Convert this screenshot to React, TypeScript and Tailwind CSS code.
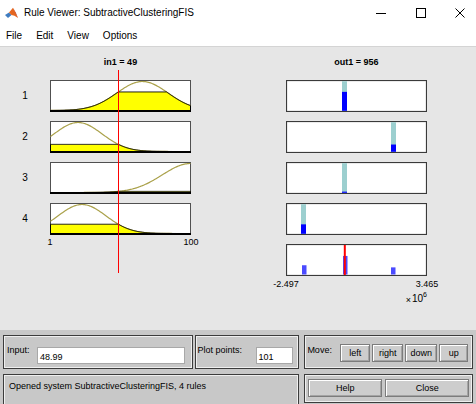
import React from "react";

const W = 141;
const H = 32;

type MF = { c: number; s: number };
const mfs: MF[] = [
  { c: 66, s: 18 },
  { c: 20.5, s: 17 },
  { c: 100, s: 20 },
  { c: 23.3, s: 17 },
];
const INPUT = 48.99;
const g = (x: number, m: MF) => Math.exp(-((x - m.c) ** 2) / (2 * m.s * m.s));
const fires = mfs.map((m) => g(INPUT, m));

function InputBox({ m }: { m: MF }) {
  const f = g(INPUT, m);
  const top = 1.5;
  const bot = 30.5;
  const yv = (v: number) => bot - v * (bot - top);
  const curve: string[] = [];
  const fill: string[] = [];
  for (let i = 0; i <= 140; i++) {
    const xd = 1 + (99 * i) / 140;
    const v = g(xd, m);
    const px = 0.5 + i;
    curve.push(`${px},${yv(v).toFixed(2)}`);
    fill.push(`${px},${yv(Math.min(v, f)).toFixed(2)}`);
  }
  return (
    <svg width={W} height={H} className="block">
      <rect x={0.5} y={0.5} width={W - 1} height={H - 1} fill="#ffffff" stroke="#505050" />
      <polyline points={curve.join(" ")} fill="none" stroke="#aaa14a" strokeWidth={1.2} />
      <polygon
        points={`0.5,${bot} ${fill.join(" ")} 140.5,${bot}`}
        fill="#ffff00"
        stroke="#000000"
        strokeWidth={1}
      />
      <line x1={0} y1={31} x2={141} y2={31} stroke="#000000" strokeWidth={2} />
    </svg>
  );
}

function OutBox({ x, f }: { x: number; f: number }) {
  return (
    <svg width={W} height={H} className="block">
      <rect x={0.5} y={0.5} width={W - 1} height={H - 1} fill="#ffffff" stroke="#3a3a3a" strokeWidth={1.2} />
      <rect x={x} y={1.2} width={5} height={29.6} fill="#9ccfcf" />
      <rect x={x} y={30.8 - f * 29.6} width={5} height={f * 29.6} fill="#0000ff" />
    </svg>
  );
}

function AggBox() {
  const bars = [
    { x: 16, f: fires[3] },
    { x: 57, f: fires[0] },
    { x: 105, f: fires[1] },
  ];
  return (
    <svg width={W} height={H} className="block">
      <rect x={0.5} y={0.5} width={W - 1} height={H - 1} fill="#ffffff" stroke="#3a3a3a" strokeWidth={1.2} />
      {bars.map((b, i) => (
        <rect key={i} x={b.x} y={30.5 - b.f * 29} width={4.5} height={b.f * 29} fill="#4b4bff" />
      ))}
      <rect x={57.8} y={1} width={2} height={30} fill="#ff0000" />
    </svg>
  );
}

function MatlabIcon() {
  return (
    <svg width="13" height="12" viewBox="0 0 13 12" className="block">
      <path d="M0 8 L4 5.5 L6.5 8 L3 11 Z" fill="#3f7cc0" />
      <path d="M4 5.5 L8 0.8 L13 11 L9.5 8.8 L6.5 8 Z" fill="#e5661f" />
      <path d="M8 0.8 L10.2 5.8 L13 11 L11 6 Z" fill="#b93418" />
    </svg>
  );
}

function Panel({ className, children }: { className: string; children?: React.ReactNode }) {
  return (
    <div
      className={
        "border border-[#3c3c3c] shadow-[inset_1px_1px_0_#efefef,inset_-1px_-1px_0_#efefef] bg-[#c8c8c8] " +
        className
      }
    >
      {children}
    </div>
  );
}

function Btn({ className, label }: { className: string; label: string }) {
  return (
    <div
      className={
        "h-[18px] flex items-center justify-center bg-[#cdcdcd] border border-[#7c7c7c] shadow-[inset_1px_1px_0_#ffffff,inset_-1px_-1px_0_#a4a4a4] text-black " +
        className
      }
    >
      {label}
    </div>
  );
}

export default function App() {
  const outX = [56, 105, 56, 15];
  return (
    <div
      className="w-[476px] h-[404px] overflow-hidden bg-white flex flex-col text-black"
      style={{ fontFamily: '"Liberation Sans", Arial, sans-serif' }}
    >
      {/* title bar */}
      <div className="h-[25px] flex items-center bg-white shrink-0">
        <div className="ml-[5px]">
          <MatlabIcon />
        </div>
        <span className="ml-[6px] text-[10px] leading-[12px]">Rule Viewer: SubtractiveClusteringFIS</span>
        <div className="ml-auto flex h-full">
          <div className="w-[40px] flex items-center justify-center">
            <svg width="10" height="10" viewBox="0 0 10 10">
              <line x1="0" y1="5.5" x2="10" y2="5.5" stroke="#000" strokeWidth="1" />
            </svg>
          </div>
          <div className="w-[40px] flex items-center justify-center">
            <svg width="10" height="10" viewBox="0 0 10 10">
              <rect x="0.5" y="0.5" width="9" height="9" fill="none" stroke="#000" strokeWidth="1" />
            </svg>
          </div>
          <div className="w-[35px] flex items-center pl-[14px]">
            <svg width="10" height="10" viewBox="0 0 10 10">
              <path d="M0.5 0.5 L9.5 9.5 M9.5 0.5 L0.5 9.5" stroke="#000" strokeWidth="1" />
            </svg>
          </div>
        </div>
      </div>
      {/* menu bar */}
      <div className="h-[21px] flex items-center gap-[14px] pl-[6px] text-[10px] bg-white shrink-0">
        <span>File</span>
        <span>Edit</span>
        <span>View</span>
        <span>Options</span>
      </div>
      <div className="h-px bg-[#d4d4d4] shrink-0" />

      {/* plot area */}
      <div className="relative h-[283px] bg-[#e6e6e6] flex pt-[9px] shrink-0">
        <div className="w-[191px] flex flex-col">
          <div className="ml-[50px] w-[141px] h-[12px] text-center font-bold text-[9px] leading-[12px]">
            in1 = 49
          </div>
          <div className="mt-[12px] flex flex-col gap-[9px]">
            {mfs.map((m, i) => (
              <div key={i} className="flex items-center">
                <div className="w-[50px] text-center text-[10px] leading-[12px]">{i + 1}</div>
                <InputBox m={m} />
              </div>
            ))}
          </div>
          <div className="ml-[50px] w-[141px] flex justify-between mt-[2px] text-[9px] leading-[11px]">
            <span className="-ml-[15px] w-[30px] text-center">1</span>
            <span className="-mr-[15px] w-[30px] text-center">100</span>
          </div>
        </div>
        <div className="ml-[95px] w-[141px] flex flex-col">
          <div className="h-[12px] text-center font-bold text-[9px] leading-[12px]">out1 = 956</div>
          <div className="mt-[12px] flex flex-col gap-[9px]">
            {fires.map((f, i) => (
              <OutBox key={i} x={outX[i]} f={f} />
            ))}
            <AggBox />
          </div>
          <div className="flex justify-between mt-[3px] text-[9px] leading-[11px]">
            <span className="-ml-[15px] w-[30px] text-center">-2.497</span>
            <span className="-mr-[15px] w-[30px] text-center">3.465</span>
          </div>
          <div className="mt-[3px] flex justify-end items-start text-[10px] leading-[12px]">
            <span className="text-[9px] mt-[1px] mr-[1px]">×</span>
            <span>10</span>
            <span className="text-[7px] leading-[7px] -mt-[2px]">6</span>
          </div>
        </div>
        <div className="absolute left-[118px] top-[23px] h-[203px] w-px bg-[#ff0000]" />
      </div>

      {/* bottom controls */}
      <div className="h-[74px] bg-[#c8c8c8] px-[3px] pt-[5px] flex flex-col gap-[5px] text-[9px] leading-[11px] shrink-0">
        <div className="flex h-[34px] shrink-0">
          <Panel className="w-[190px] flex items-start">
            <span className="w-[33px] pl-[3px] pt-[9px]">Input:</span>
            <div className="mt-[11px] w-[148px] h-[17px] bg-white border border-[#a8a8a8] pl-[2px] pt-[4px]">
              48.99
            </div>
          </Panel>
          <Panel className="ml-[2px] w-[105px] flex items-start">
            <span className="w-[60px] pl-[2px] pt-[9px]">Plot points:</span>
            <div className="mt-[11px] w-[37px] h-[17px] bg-white border border-[#a8a8a8] pl-[2px] pt-[4px]">
              101
            </div>
          </Panel>
          <Panel className="ml-[5px] w-[169px] flex items-start">
            <span className="w-[35px] pl-[2px] pt-[9px]">Move:</span>
            <div className="mt-[8px] flex">
              <Btn className="w-[30px]" label="left" />
              <Btn className="ml-[2px] w-[31px]" label="right" />
              <Btn className="ml-[2px] w-[32px]" label="down" />
              <Btn className="ml-[2px] w-[29px]" label="up" />
            </div>
          </Panel>
        </div>
        <div className="flex flex-1 items-start">
          <Panel className="w-[297px] h-[32px] pl-[5px] pt-[6px]">
            Opened system SubtractiveClusteringFIS, 4 rules
          </Panel>
          <Panel className="ml-[5px] w-[169px] h-[29px] flex items-start">
            <div className="mt-[4px] ml-[3px] flex">
              <Btn className="w-[74px]" label="Help" />
              <Btn className="ml-[3px] w-[84px]" label="Close" />
            </div>
          </Panel>
        </div>
      </div>
    </div>
  );
}
